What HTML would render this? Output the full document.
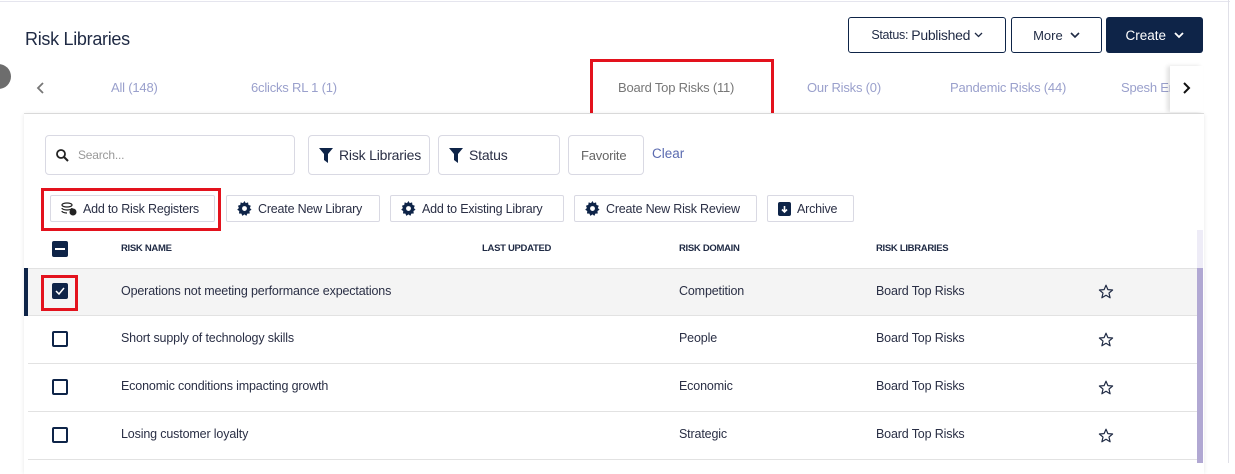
<!DOCTYPE html>
<html><head><meta charset="utf-8"><style>
*{box-sizing:border-box;margin:0;padding:0}
html,body{width:1235px;height:463px}
body{background:#fff;font-family:"Liberation Sans",sans-serif;position:relative;overflow:hidden;color:#1f2a44}
.a{position:absolute}
.btn{position:absolute;border:1px solid #d9d9e3;background:#fff;font-size:12.5px;color:#2a2f45;display:flex;align-items:center;padding-left:10px;gap:6px;border-radius:2px;white-space:nowrap;letter-spacing:-.2px}
.red{position:absolute;border:3px solid #e3121d}
.tab{position:absolute;top:80px;font-size:13px;color:#9aa0cc;letter-spacing:-.2px}
.hd{position:absolute;top:243px;font-size:9.5px;font-weight:bold;color:#1f2a44;letter-spacing:-.3px}
.row{position:absolute;left:28px;width:1169px;height:48px;border-bottom:1px solid #e2e2e2}
.cell{position:absolute;font-size:12.5px;color:#2a2f45;letter-spacing:-.15px}
.cb{position:absolute;left:52px;width:16px;height:16px;border:2px solid #0e2448;border-radius:2px}
.star{position:absolute;left:1098px}
</style></head><body>
<div class="a" style="left:0;top:1px;width:1230px;height:1px;background:#e5e5ee"></div>
<div class="a" style="left:1228px;top:0;width:1px;height:463px;background:#e0e0e8"></div>
<div class="a" style="left:25px;top:29px;font-size:18px;color:#1f2a44;letter-spacing:-.3px">Risk Libraries</div>
<div class="a" style="left:848px;top:17px;width:158px;height:36px;border:1px solid #0e2448;border-radius:3px;font-size:14px;display:flex;align-items:center;justify-content:center;color:#1f2a44;letter-spacing:-.3px"><span style="font-size:12.5px">Status:&nbsp;</span>Published&nbsp;<svg width="9" height="6"><path d="M1 1l3.5 3.5L8 1" stroke="#1f2a44" stroke-width="1.3" fill="none"/></svg></div>
<div class="a" style="left:1011px;top:17px;width:91px;height:36px;border:1px solid #0e2448;border-radius:3px;font-size:13px;display:flex;align-items:center;justify-content:center">More&nbsp;&nbsp;<svg width="10" height="7"><path d="M1 1l4 4 4-4" stroke="#1f2a44" stroke-width="1.6" fill="none"/></svg></div>
<div class="a" style="left:1106px;top:17px;width:97px;height:36px;background:#0e2448;border-radius:3px;font-size:13.5px;color:#fff;display:flex;align-items:center;justify-content:center">Create&nbsp;&nbsp;<svg width="10" height="7"><path d="M1 1l4 4 4-4" stroke="#fff" stroke-width="1.8" fill="none"/></svg></div>
<div class="a" style="left:-14px;top:64px;width:25px;height:25px;border-radius:50%;background:#6d6d6d"></div>
<svg class="a" style="left:36px;top:82px" width="10" height="12"><path d="M7 1L2 6l5 5" stroke="#777" stroke-width="1.8" fill="none"/></svg>
<div class="tab" style="left:111px">All (148)</div>
<div class="tab" style="left:251px">6clicks RL 1 (1)</div>
<div class="tab" style="left:618px;color:#777">Board Top Risks (11)</div>
<div class="tab" style="left:807px">Our Risks (0)</div>
<div class="tab" style="left:950px">Pandemic Risks (44)</div>
<div class="tab" style="left:1121px;width:50px;overflow:hidden;white-space:nowrap">Spesh Ent</div>
<div class="a" style="left:1170px;top:66px;width:33px;height:46px;background:#fff;box-shadow:-3px 0 4px rgba(0,0,0,.12)"></div>
<svg class="a" style="left:1182px;top:82px" width="10" height="12"><path d="M2 1l5 5-5 5" stroke="#111" stroke-width="2" fill="none"/></svg>
<div class="red" style="left:590px;top:59px;width:184px;height:57px"></div>
<div class="a" style="left:24px;top:113px;width:1180px;height:1px;background:#e2e2e2"></div>
<div class="a" style="left:24px;top:114px;width:1180px;height:360px;box-shadow:0 0 4px rgba(0,0,0,.1);background:#fff"></div>
<div class="btn" style="left:45px;top:135px;width:250px;height:40px;border-radius:4px;color:#999;gap:9px"><svg width="13" height="13"><circle cx="5" cy="5" r="4" stroke="#222" stroke-width="1.8" fill="none"/><path d="M8 8l4 4" stroke="#222" stroke-width="2"/></svg><span style="font-size:12px">Search...</span></div>
<div class="btn" style="left:308px;top:135px;width:122px;height:40px;border-radius:4px;font-size:14px"><svg width="14" height="15"><path d="M0 0h14L9 6v9L5 12V6z" fill="#0e2448"/></svg>Risk Libraries</div>
<div class="btn" style="left:438px;top:135px;width:122px;height:40px;border-radius:4px;font-size:14px"><svg width="14" height="15"><path d="M0 0h14L9 6v9L5 12V6z" fill="#0e2448"/></svg>Status</div>
<div class="btn" style="left:568px;top:135px;width:76px;height:40px;border-radius:4px;font-size:13px;color:#666;padding-left:12px">Favorite</div>
<div class="a" style="left:652px;top:146px;font-size:13.5px;color:#5b6bb0">Clear</div>
<svg width="0" height="0" style="position:absolute"><defs><symbol id="g" viewBox="0 0 16 16"><path d="M8 0l1.3 2.2 2.5-.7.4 2.6 2.5.9-1 2.4 1.8 1.9-2.2 1.4.3 2.6-2.6.1-1 2.4L8 14.3l-2.3 1.5-1-2.4-2.6-.1.3-2.6L.2 9.3 2 7.4 1 5l2.5-.9.4-2.6 2.5.7z" fill="#0e2448"/><circle cx="8" cy="8" r="2.6" fill="#fff"/></symbol><symbol id="s" viewBox="0 0 16 16"><path d="M8 1.2l1.9 4.4 4.7.4-3.6 3.1 1.1 4.7L8 11.3 3.9 13.8 5 9.1 1.4 6l4.7-.4z" fill="none" stroke="#1f2a44" stroke-width="1.2" stroke-linejoin="round"/></symbol></defs></svg>
<div class="btn" style="left:50px;top:195px;width:165px;height:27px"><svg width="16" height="14"><g stroke="#222" stroke-width="1.2" fill="none"><ellipse cx="6" cy="3" rx="5" ry="2"/><path d="M1 6c0 1 2 2 5 2s5-1 5-2M1 9c0 1 2 2 5 2"/></g><circle cx="12" cy="10" r="3.5" fill="#222"/></svg>Add to Risk Registers</div>
<div class="red" style="left:41px;top:188px;width:180px;height:43px"></div>
<div class="btn" style="left:226px;top:195px;width:154px;height:27px"><svg width="15" height="15"><use href="#g"/></svg>Create New Library</div>
<div class="btn" style="left:390px;top:195px;width:174px;height:27px"><svg width="15" height="15"><use href="#g"/></svg>Add to Existing Library</div>
<div class="btn" style="left:574px;top:195px;width:183px;height:27px"><svg width="15" height="15"><use href="#g"/></svg>Create New Risk Review</div>
<div class="btn" style="left:767px;top:195px;width:87px;height:27px"><svg width="13" height="14"><rect width="13" height="14" rx="2" fill="#0e2448"/><path d="M6.5 4v6M4 7.5l2.5 2.5L9 7.5" stroke="#fff" stroke-width="1.6" fill="none"/></svg>Archive</div>
<div class="a" style="left:1197px;top:230px;width:6px;height:233px;background:#eeecf7"></div>
<div class="a" style="left:1197px;top:268px;width:6px;height:195px;background:#b1a8d3"></div>
<div class="a" style="left:52px;top:241px;width:16px;height:16px;background:#0e2448;border-radius:2px"><div style="position:absolute;left:3px;top:7px;width:10px;height:2px;background:#fff"></div></div>
<div class="hd" style="left:121px">RISK NAME</div>
<div class="hd" style="left:482px">LAST UPDATED</div>
<div class="hd" style="left:679px">RISK DOMAIN</div>
<div class="hd" style="left:876px">RISK LIBRARIES</div>
<div class="a" style="left:28px;top:268px;width:1169px;height:1px;background:#e2e2e2"></div>
<div class="row" style="top:269px;background:#f4f4f4;height:47px"></div>
<div class="a" style="left:24px;top:268px;width:4px;height:48px;background:#0e2448"></div>
<div class="row" style="top:316px"></div><div class="row" style="top:364px"></div><div class="row" style="top:412px"></div>
<div class="a" style="left:52px;top:283px;width:16px;height:16px;background:#0e2448;border-radius:2px"><svg width="16" height="16"><path d="M4 8l3 3 5-6" stroke="#fff" stroke-width="1.5" fill="none"/></svg></div>
<div class="red" style="left:41px;top:275px;width:37px;height:36px"></div>
<div class="cb" style="top:331px"></div><div class="cb" style="top:379px"></div><div class="cb" style="top:427px"></div>
<div class="cell" style="left:121px;top:284px">Operations not meeting performance expectations</div>
<div class="cell" style="left:121px;top:331px">Short supply of technology skills</div>
<div class="cell" style="left:121px;top:379px">Economic conditions impacting growth</div>
<div class="cell" style="left:121px;top:427px">Losing customer loyalty</div>
<div class="cell" style="left:679px;top:284px">Competition</div>
<div class="cell" style="left:679px;top:331px">People</div>
<div class="cell" style="left:679px;top:379px">Economic</div>
<div class="cell" style="left:679px;top:427px">Strategic</div>
<div class="cell" style="left:876px;top:284px">Board Top Risks</div>
<div class="cell" style="left:876px;top:331px">Board Top Risks</div>
<div class="cell" style="left:876px;top:379px">Board Top Risks</div>
<div class="cell" style="left:876px;top:427px">Board Top Risks</div>
<svg class="star" style="top:284px" width="16" height="16"><use href="#s"/></svg>
<svg class="star" style="top:332px" width="16" height="16"><use href="#s"/></svg>
<svg class="star" style="top:380px" width="16" height="16"><use href="#s"/></svg>
<svg class="star" style="top:428px" width="16" height="16"><use href="#s"/></svg>
</body></html>
